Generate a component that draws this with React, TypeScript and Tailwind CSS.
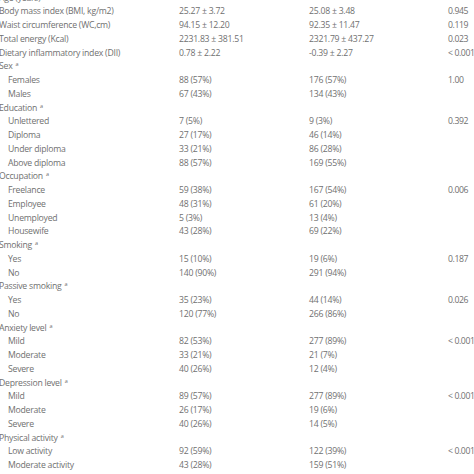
import React from 'react';

type Row = { label: string; sub?: boolean; group?: boolean; a?: string; b?: string; p?: string };

const rows: Row[] = [
    { label: 'Age (years)' },
    { label: 'Body mass index (BMI, kg/m2)', a: '25.27 ± 3.72', b: '25.08 ± 3.48', p: '0.945' },
    { label: 'Waist circumference (WC,cm)', a: '94.15 ± 12.20', b: '92.35 ± 11.47', p: '0.119' },
    { label: 'Total energy (Kcal)', a: '2231.83 ± 381.51', b: '2321.79 ± 437.27', p: '0.023' },
    { label: 'Dietary inflammatory index (DII)', a: '0.78 ± 2.22', b: '-0.39 ± 2.27', p: '< 0.001' },
    { label: 'Sex', group: true },
    { label: 'Females', sub: true, a: '88 (57%)', b: '176 (57%)', p: '1.00' },
    { label: 'Males', sub: true, a: '67 (43%)', b: '134 (43%)' },
    { label: 'Education', group: true },
    { label: 'Unlettered', sub: true, a: '7 (5%)', b: '9 (3%)', p: '0.392' },
    { label: 'Diploma', sub: true, a: '27 (17%)', b: '46 (14%)' },
    { label: 'Under diploma', sub: true, a: '33 (21%)', b: '86 (28%)' },
    { label: 'Above diploma', sub: true, a: '88 (57%)', b: '169 (55%)' },
    { label: 'Occupation', group: true },
    { label: 'Freelance', sub: true, a: '59 (38%)', b: '167 (54%)', p: '0.006' },
    { label: 'Employee', sub: true, a: '48 (31%)', b: '61 (20%)' },
    { label: 'Unemployed', sub: true, a: '5 (3%)', b: '13 (4%)' },
    { label: 'Housewife', sub: true, a: '43 (28%)', b: '69 (22%)' },
    { label: 'Smoking', group: true },
    { label: 'Yes', sub: true, a: '15 (10%)', b: '19 (6%)', p: '0.187' },
    { label: 'No', sub: true, a: '140 (90%)', b: '291 (94%)' },
    { label: 'Passive smoking', group: true },
    { label: 'Yes', sub: true, a: '35 (23%)', b: '44 (14%)', p: '0.026' },
    { label: 'No', sub: true, a: '120 (77%)', b: '266 (86%)' },
    { label: 'Anxiety level', group: true },
    { label: 'Mild', sub: true, a: '82 (53%)', b: '277 (89%)', p: '< 0.001' },
    { label: 'Moderate', sub: true, a: '33 (21%)', b: '21 (7%)' },
    { label: 'Severe', sub: true, a: '40 (26%)', b: '12 (4%)' },
    { label: 'Depression level', group: true },
    { label: 'Mild', sub: true, a: '89 (57%)', b: '277 (89%)', p: '< 0.001' },
    { label: 'Moderate', sub: true, a: '26 (17%)', b: '19 (6%)' },
    { label: 'Severe', sub: true, a: '40 (26%)', b: '14 (5%)' },
    { label: 'Physical activity', group: true },
    { label: 'Low activity', sub: true, a: '92 (59%)', b: '122 (39%)', p: '< 0.001' },
    { label: 'Moderate activity', sub: true, a: '43 (28%)', b: '159 (51%)' },
];

export default function App() {
    return (
        <div className="w-[474px] h-[474px] overflow-hidden bg-white">
            <div
                className="-mt-[8.5px] grid grid-cols-[179px_130px_139px_1fr] auto-rows-[13.76px] text-[8.7px] leading-[13.76px] text-[#707070] tracking-[-0.25px]"
                style={{ fontFamily: '"Open Sans", "Noto Sans", sans-serif' }}
            >
                {rows.map((r, i) => (
                    <React.Fragment key={i}>
                        <div className={r.sub ? 'pl-[8px] whitespace-nowrap' : '-ml-[1px] whitespace-nowrap'}>
                            {r.label}
                            {r.group && <span className="ml-[3px] text-[5.5px] relative -top-[3px]">a</span>}
                        </div>
                        <div className="whitespace-nowrap">{r.a}</div>
                        <div className="whitespace-nowrap">{r.b}</div>
                        <div className="whitespace-nowrap tracking-[-0.4px]">{r.p}</div>
                    </React.Fragment>
                ))}
            </div>
        </div>
    );
}
